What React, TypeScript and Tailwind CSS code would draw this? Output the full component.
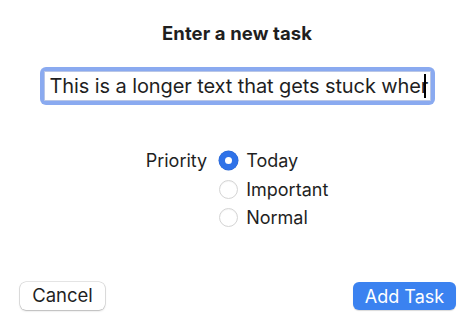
import React from "react";

function Radio({ checked }: { checked?: boolean }) {
  return checked ? (
    <span className="w-[19px] h-[19px] rounded-full bg-[#2f72e8] flex items-center justify-center shadow-[0_0_0_0.5px_#2a66d0]">
      <span className="w-[7px] h-[7px] rounded-full bg-white" />
    </span>
  ) : (
    <span className="w-[19px] h-[19px] rounded-full bg-white border border-[#d4d4d4] shadow-[inset_0_1px_1px_rgba(0,0,0,0.04)]" />
  );
}

export default function App() {
  return (
    <div
      className="w-[474px] h-[327px] bg-white flex flex-col items-center text-[#1f1f1f]"
      style={{ fontFamily: "Inter, 'Noto Sans', sans-serif" }}
    >
      <div className="mt-[21px] text-[18.5px] font-bold leading-[24px] tracking-[0.1px]">Enter a new task</div>
      <div className="mt-[22px] w-[395px] h-[38px] rounded-[6px] bg-[#8aaaf0] p-[4px]">
        <div className="w-full h-full bg-white border border-[#b9c6e6] flex items-center pl-[5px] overflow-hidden">
          <span className="shrink-0 text-[20px] leading-none whitespace-nowrap tracking-[-0.1px]">This is a longer text that gets stuck wher</span>
          <span className="shrink-0 w-[2px] h-[24px] bg-black ml-[-4px]" />
        </div>
      </div>
      <div className="mt-[46px] flex gap-[12px]">
        <div className="text-[18px] leading-[19px]">Priority</div>
        <div className="flex flex-col gap-[9.5px]">
          {[
            ["Today", true],
            ["Important", false],
            ["Normal", false],
          ].map(([l, c]) => (
            <div key={l as string} className="flex items-center gap-[8px] h-[19px]">
              <Radio checked={c as boolean} />
              <span className="text-[18px] leading-[19px]">{l as string}</span>
            </div>
          ))}
        </div>
      </div>
      <div className="mt-auto mb-[17px] w-full flex justify-between px-[20px]">
        <button className="w-[85px] h-[28px] rounded-[6px] bg-white text-[18.5px] text-[#1f1f1f] shadow-[0_0_0_0.5px_rgba(0,0,0,0.2),0_1px_2px_rgba(0,0,0,0.2)]">
          Cancel
        </button>
        <button className="w-[103px] h-[28px] rounded-[6px] bg-[#3b82f0] text-[18px] text-white shadow-[0_1px_1px_rgba(0,0,0,0.15)] mr-[-2px]">
          Add Task
        </button>
      </div>
    </div>
  );
}
